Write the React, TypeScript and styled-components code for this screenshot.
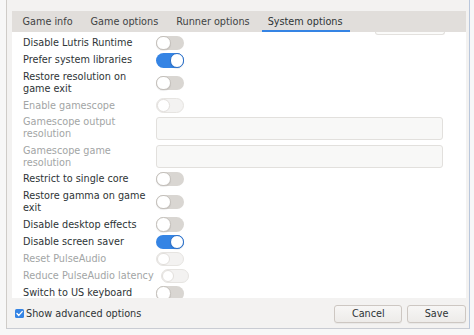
import React from "react";
import styled, { createGlobalStyle } from "styled-components";

const Global = createGlobalStyle`
  html, body { margin: 0; padding: 0; background: #f7f7f7; }
  body { font-family: "DejaVu Sans", "Liberation Sans", sans-serif; font-size: 9.7px; color: #2e3436; }
  * { box-sizing: border-box; }
`;

const Frame = styled.div`
  margin-left: 6px;
  width: 464px;
  height: 329px;
  background: #f3f2f1;
  border-left: 1px solid #cfccc8;
  border-right: 1px solid #b9c7dc;
  border-bottom: 1px solid #c9ccd3;
  padding: 11px 3px 0 5px;
  display: flex;
  flex-direction: column;
`;

const Notebook = styled.div`
  height: 287px;
  display: flex;
  flex-direction: column;
  background: #ffffff;
`;

const TabBar = styled.div`
  height: 20.5px;
  flex: none;
  display: flex;
  align-items: stretch;
  background: #e1dedb;
  padding-left: 1.5px;
`;

const Tab = styled.div<{ $active?: boolean }>`
  position: relative;
  display: flex;
  align-items: center;
  padding: 1px 9px 0;
  color: ${(p) => (p.$active ? "#2e3436" : "#3f4344")};
  white-space: nowrap;
  &::after {
    content: "";
    position: absolute;
    left: 3px;
    right: 2px;
    bottom: 0;
    height: 2px;
    background: ${(p) => (p.$active ? "#3584e4" : "transparent")};
  }
`;

const Content = styled.div`
  flex: 1;
  overflow: hidden;
  display: flex;
  flex-direction: column;
  padding-left: 11px;
`;

const Remnant = styled.div`
  height: 3px;
  flex: none;
  display: flex;
  justify-content: flex-end;
  padding-right: 21px;
`;

const RemnantEdge = styled.div`
  width: 70px;
  height: 3px;
  border: 1px solid #e3e1de;
  border-top: none;
  border-radius: 0 0 3px 3px;
  background: #fbfbfa;
`;

const Row = styled.div<{ $tall?: boolean }>`
  flex: none;
  height: ${(p) => (p.$tall ? "28.2px" : "17.2px")};
  display: flex;
  align-items: center;
`;

const Label = styled.div<{ $disabled?: boolean; $nowrap?: boolean }>`
  flex: none;
  width: ${(p) => (p.$nowrap ? "auto" : "125px")};
  min-width: 125px;
  white-space: ${(p) => (p.$nowrap ? "nowrap" : "normal")};
  margin-right: ${(p) => (p.$nowrap ? "7px" : "8px")};
  line-height: 12px;
  color: ${(p) => (p.$disabled ? "#a2a5a5" : "#2e3436")};
`;

const Track = styled.span<{ $on?: boolean; $disabled?: boolean }>`
  flex: none;
  width: 28px;
  height: 14.5px;
  border-radius: 8px;
  display: flex;
  align-items: center;
  justify-content: ${(p) => (p.$on ? "flex-end" : "flex-start")};
  background: ${(p) => (p.$on ? "#3584e4" : p.$disabled ? "#f3f2f1" : "#d9d6d2")};
  border: ${(p) => (p.$disabled ? "1px solid #e6e4e1" : "none")};
`;

const Knob = styled.span<{ $on?: boolean; $disabled?: boolean }>`
  width: ${(p) => (p.$disabled ? "12.5px" : "14.5px")};
  height: ${(p) => (p.$disabled ? "12.5px" : "14.5px")};
  border-radius: 50%;
  background: #ffffff;
  border: 1px solid ${(p) => (p.$on ? "#2a6ec6" : p.$disabled ? "#e2dfdc" : "#c4c0bb")};
  box-shadow: ${(p) => (p.$disabled ? "none" : "0 1px 1px rgba(0,0,0,0.08)")};
`;

const Entry = styled.div`
  flex: none;
  width: 287px;
  height: 23.5px;
  border: 1px solid #e2e0dd;
  border-radius: 3px;
  background: #f8f8f7;
`;

const BottomBar = styled.div`
  flex: 1;
  display: flex;
  align-items: center;
  padding: 1px 0 0 3px;
`;

const CheckLabel = styled.label`
  display: flex;
  align-items: center;
  gap: 2px;
  color: #2e3436;
`;

const Spacer = styled.div`
  flex: 1;
`;

const Button = styled.button`
  font-family: inherit;
  font-size: 9.7px;
  color: #2e3436;
  height: 18px;
  padding: 0 16.5px;
  margin-left: 5px;
  border: 1px solid #cdc7c2;
  border-radius: 3px;
  background: linear-gradient(#f7f6f5, #edebe9);
  box-shadow: 0 1px 0 rgba(0,0,0,0.04);
`;

type Opt = {
  label: string;
  kind: "toggle" | "entry";
  on?: boolean;
  disabled?: boolean;
  tall?: boolean;
  nowrap?: boolean;
};

const options: Opt[] = [
  { label: "Disable Lutris Runtime", kind: "toggle" },
  { label: "Prefer system libraries", kind: "toggle", on: true },
  { label: "Restore resolution on game exit", kind: "toggle", tall: true },
  { label: "Enable gamescope", kind: "toggle", disabled: true },
  { label: "Gamescope output resolution", kind: "entry", disabled: true, tall: true },
  { label: "Gamescope game resolution", kind: "entry", disabled: true, tall: true },
  { label: "Restrict to single core", kind: "toggle" },
  { label: "Restore gamma on game exit", kind: "toggle", tall: true },
  { label: "Disable desktop effects", kind: "toggle" },
  { label: "Disable screen saver", kind: "toggle", on: true },
  { label: "Reset PulseAudio", kind: "toggle", disabled: true },
  { label: "Reduce PulseAudio latency", kind: "toggle", disabled: true, nowrap: true },
  { label: "Switch to US keyboard", kind: "toggle" },
];

const tabs = ["Game info", "Game options", "Runner options", "System options"];

function CheckIcon() {
  return (
    <svg width="9" height="9" viewBox="0 0 9 9">
      <rect x="0" y="0" width="9" height="9" rx="1.5" fill="#3584e4" />
      <path d="M2 4.6 L3.8 6.4 L7.2 2.6" stroke="#fff" strokeWidth="1.4" fill="none" strokeLinecap="round" strokeLinejoin="round" />
    </svg>
  );
}

export default function App() {
  return (
    <>
      <Global />
      <Frame>
        <Notebook>
          <TabBar>
            {tabs.map((t, i) => (
              <Tab key={t} $active={i === 3}>{t}</Tab>
            ))}
          </TabBar>
          <Content>
            <Remnant>
              <RemnantEdge />
            </Remnant>
            {options.map((o) => (
              <Row key={o.label} $tall={o.tall}>
                <Label $disabled={o.disabled} $nowrap={o.nowrap}>{o.label}</Label>
                {o.kind === "toggle" ? (
                  <Track $on={o.on} $disabled={o.disabled}>
                    <Knob $on={o.on} $disabled={o.disabled} />
                  </Track>
                ) : (
                  <Entry />
                )}
              </Row>
            ))}
          </Content>
        </Notebook>
        <BottomBar>
          <CheckLabel>
            <CheckIcon />
            Show advanced options
          </CheckLabel>
          <Spacer />
          <Button>Cancel</Button>
          <Button>Save</Button>
        </BottomBar>
      </Frame>
    </>
  );
}
